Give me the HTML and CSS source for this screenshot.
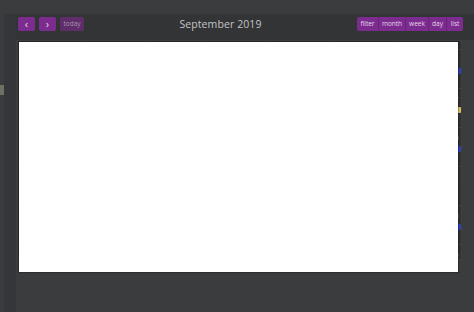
FILE: index.html
```html
<!DOCTYPE html>
<html lang="en">
<head>
    <meta charset="UTF-8">
    <meta name="viewport" content="width=device-width, initial-scale=1.0">
    <title>Calendar</title>
    <link rel="stylesheet" href="styles.css">
</head>
<body>
    <div class="side-handle"></div>
    <div class="panel">
        <div class="toolbar">
            <div class="btn-group left">
                <button class="btn arrow">&lsaquo;</button>
                <button class="btn arrow">&rsaquo;</button>
                <button class="btn today">today</button>
            </div>
            <h2 class="title">September 2019</h2>
            <div class="btn-group joined">
                <button class="btn w-filter">filter</button>
                <button class="btn w-month">month</button>
                <button class="btn w-week">week</button>
                <button class="btn w-day">day</button>
                <button class="btn w-list">list</button>
            </div>
        </div>
        <table class="grid">
            <thead>
                <tr>
                    <th>Sun</th><th>Mon</th><th>Tue</th><th>Wed</th><th>Thu</th><th>Fri</th><th>Sat</th>
                </tr>
            </thead>
            <tbody>
                <tr><td></td><td></td><td></td><td></td><td></td><td></td><td><span class="num">31</span><span class="ev blue"></span></td></tr>
                <tr><td></td><td></td><td></td><td></td><td></td><td></td><td><span class="num">7</span><span class="ev yellow"></span></td></tr>
                <tr><td></td><td></td><td></td><td></td><td></td><td></td><td><span class="num">14</span><span class="ev blue"></span></td></tr>
                <tr><td></td><td></td><td></td><td></td><td></td><td></td><td><span class="num">21</span></td></tr>
                <tr><td></td><td></td><td></td><td></td><td></td><td></td><td><span class="num">28</span><span class="ev blue"></span></td></tr>
                <tr><td></td><td></td><td></td><td></td><td></td><td></td><td><span class="num">5</span></td></tr>
            </tbody>
        </table>
    </div>
    <div class="modal"></div>
</body>
</html>
```

FILE: styles.css
```css
body {
    margin: 0;
    background-color: #3b3c3e;
    font-family: "Open Sans", "Liberation Sans", sans-serif;
    height: 312px;
    overflow: hidden;
    position: relative;
}

.side-handle {
    position: absolute;
    left: 0;
    top: 85px;
    width: 4px;
    height: 10px;
    background-color: #6e7062;
}

.panel {
    margin-left: 4px;
    margin-top: 14px;
    border-left: 12px solid #35363a;
    height: 298px;
    box-sizing: border-box;
    background: linear-gradient(#333436 0, #333436 26px, #3b3c3e 26px);
}

.toolbar {
    display: flex;
    justify-content: space-between;
    align-items: center;
    height: 14px;
    padding: 3px 11px 9px 2px;
}

.btn-group {
    display: flex;
    gap: 4px;
}

.btn-group.joined {
    gap: 0;
    border-radius: 2px;
    overflow: hidden;
}

.btn {
    background-color: #7c2b8f;
    color: #e6d8ea;
    border: none;
    border-radius: 2px;
    height: 14px;
    padding: 0;
    font-family: "Open Sans", "Liberation Sans", sans-serif;
    font-size: 6.5px;
    line-height: 14px;
    text-align: center;
}

.btn.arrow {
    width: 17px;
    font-size: 11px;
    line-height: 12px;
}

.btn.today {
    background-color: #5e2d6a;
    color: #a893ad;
    width: 24px;
}

.joined .btn {
    border-radius: 0;
    border-left: 1px solid #6a2379;
}

.joined .btn:first-child {
    border-left: none;
}

.w-filter { width: 21px; }
.w-month { width: 27px; }
.w-week { width: 23px; }
.w-day { width: 18px; }
.w-list { width: 17px; }

.title {
    margin: 0;
    font-size: 10.5px;
    font-weight: normal;
    color: #c4c4c6;
    letter-spacing: 0.1px;
}

.grid {
    margin-left: 1px;
    width: 445px;
    border-collapse: collapse;
    table-layout: fixed;
    background-color: #313234;
}

.grid th {
    height: 8px;
    padding: 0;
    font-size: 6px;
    line-height: 8px;
    font-weight: normal;
    color: #bdbdbd;
    border: 1px solid #3f4043;
}

.grid td {
    height: 38px;
    padding: 0;
    border: 1px solid #3f4043;
    vertical-align: top;
}

.grid tbody tr:last-child td {
    height: 14px;
}

.num {
    display: block;
    text-align: right;
    font-size: 6px;
    color: #9a9a9c;
    padding: 6px 2px 0 0;
}

.ev {
    display: block;
    height: 6px;
    margin-top: 4px;
    border-radius: 1px;
}

.ev.blue {
    background-color: #2e3fb8;
}

.ev.yellow {
    background-color: #d9bf5c;
}

.modal {
    position: absolute;
    left: 19px;
    top: 42px;
    width: 439px;
    height: 230px;
    background-color: #ffffff;
    box-shadow: 0 0 1px 1px rgba(0, 0, 0, 0.25);
}
```
